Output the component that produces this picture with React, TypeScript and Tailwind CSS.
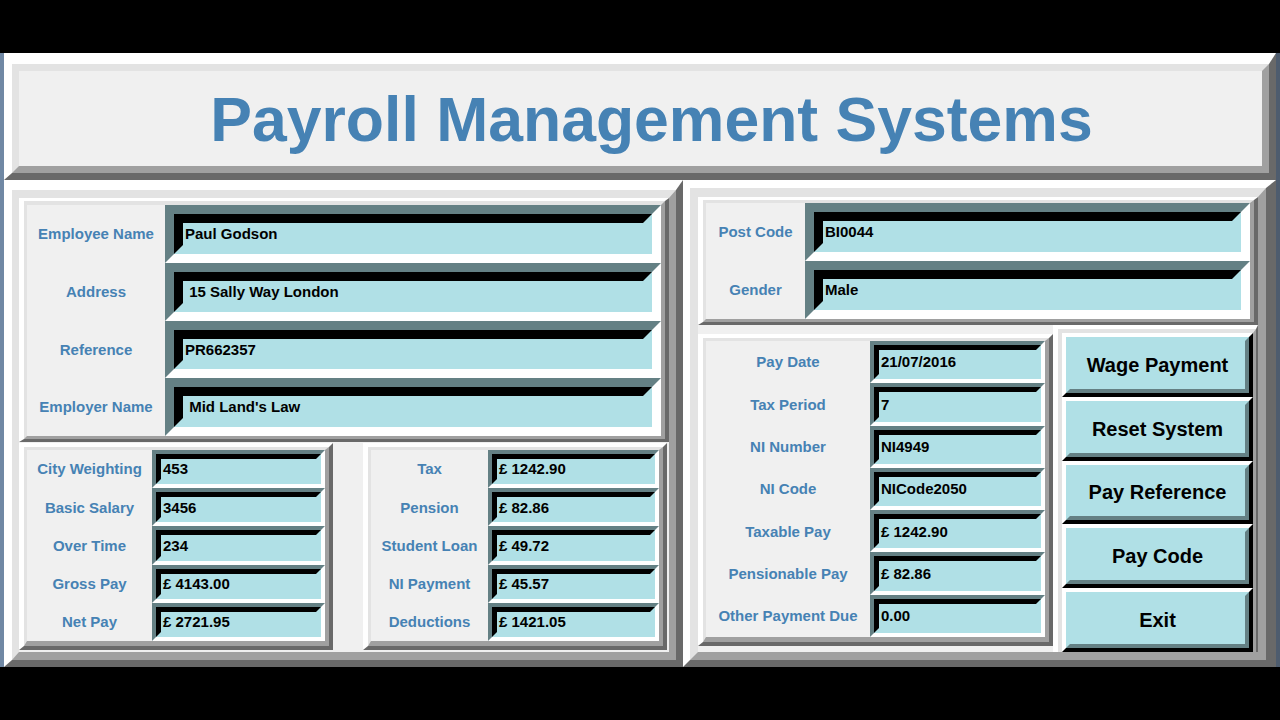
import type { ReactNode } from 'react';

type Field = { label: string; value: string };

const employee: Field[] = [
  { label: 'Employee Name', value: 'Paul Godson' },
  { label: 'Address', value: ' 15 Sally Way London' },
  { label: 'Reference', value: 'PR662357' },
  { label: 'Employer Name', value: " Mid Land's Law" },
];

const earnings: Field[] = [
  { label: 'City Weighting', value: '453' },
  { label: 'Basic Salary', value: '3456' },
  { label: 'Over Time', value: '234' },
  { label: 'Gross Pay', value: '£ 4143.00' },
  { label: 'Net Pay', value: '£ 2721.95' },
];

const deductions: Field[] = [
  { label: 'Tax', value: '£ 1242.90' },
  { label: 'Pension', value: '£ 82.86' },
  { label: 'Student Loan', value: '£ 49.72' },
  { label: 'NI Payment', value: '£ 45.57' },
  { label: 'Deductions', value: '£ 1421.05' },
];

const postal: Field[] = [
  { label: 'Post Code', value: 'BI0044' },
  { label: 'Gender', value: 'Male' },
];

const payInfo: Field[] = [
  { label: 'Pay Date', value: '21/07/2016' },
  { label: 'Tax Period', value: '7' },
  { label: 'NI Number', value: 'NI4949' },
  { label: 'NI Code', value: 'NICode2050' },
  { label: 'Taxable Pay', value: '£ 1242.90' },
  { label: 'Pensionable Pay', value: '£ 82.86' },
  { label: 'Other Payment Due', value: '0.00' },
];

const actions = ['Wage Payment', 'Reset System', 'Pay Reference', 'Pay Code', 'Exit'];

const OUTER_COLORS = 'border-t-white border-l-white border-r-[#696969] border-b-[#696969]';
const INNER_COLORS = 'border-t-[#e3e3e3] border-l-[#e3e3e3] border-r-[#a0a0a0] border-b-[#a0a0a0]';

// raised sub-panel (white/lightgray top-left, gray/dark bottom-right)
function SubPanel({
  className,
  outer = 'border-t-[4px] border-l-[5px] border-r-[4px] border-b-[4px]',
  inner = 'border-t-[3px] border-l-[3px] border-r-[4px] border-b-[5px]',
  children,
}: {
  className: string;
  outer?: string;
  inner?: string;
  children: ReactNode;
}) {
  return (
    <div className={`${className} ${outer} ${OUTER_COLORS}`}>
      <div className={`h-full flex flex-col bg-[#f0f0f0] ${inner} ${INNER_COLORS}`}>{children}</div>
    </div>
  );
}

function Label({ text, width }: { text: string; width: string }) {
  return (
    <div className={`${width} shrink-0 flex items-center justify-center pt-[1px] text-[15px] font-bold text-[#4682b4]`}>
      {text}
    </div>
  );
}

function BigBox({ value }: { value: string }) {
  return (
    <div className="flex-1 h-full border-[9px] border-t-[#648084] border-l-[#648084] border-r-white border-b-white">
      <div className="h-full flex items-center pl-[2px] pt-[1px] whitespace-pre text-[15px] font-bold text-black bg-[#b0e0e6] border-[9px] border-t-black border-l-black border-r-[#b0e0e6] border-b-[#b0e0e6]">
        {value}
      </div>
    </div>
  );
}

function SmallBox({ value }: { value: string }) {
  return (
    <div className="flex-1 h-full border-[4px] border-t-[#648084] border-l-[#648084] border-r-white border-b-white">
      <div className="h-full flex items-center pl-[2px] pt-[1px] whitespace-pre text-[15px] font-bold text-black bg-[#b0e0e6] border-[5px] border-t-black border-l-black border-r-[#b0e0e6] border-b-[#b0e0e6]">
        {value}
      </div>
    </div>
  );
}

function ActionButton({ text }: { text: string }) {
  return (
    <button
      type="button"
      className="flex-1 min-h-0 w-full border-[4px] border-t-white border-l-white border-r-black border-b-black"
    >
      <div className="h-full flex items-center justify-center text-[20px] font-bold text-black bg-[#b0e0e6] border-[4px] border-t-[#b0e0e6] border-l-[#b0e0e6] border-r-[#648084] border-b-[#648084]">
        {text}
      </div>
    </button>
  );
}

export default function App() {
  return (
    <div className="w-[1280px] h-[720px] bg-black flex flex-col overflow-hidden font-['Liberation_Sans',Arial,Helvetica,sans-serif]">
      <div className="h-[53px] shrink-0" />
      <div className="flex h-[614px] shrink-0">
        <div className="w-[4px] bg-[#7088a4]" />

        <div className="w-[1272px] flex flex-col bg-[#f0f0f0]">
          {/* title bar */}
          <div className="h-[127px] shrink-0 border-t-[11px] border-l-[8px] border-r-[7px] border-b-[7px] border-t-white border-l-white border-r-[#696969] border-b-[#696969]">
            <div className="h-full flex items-center justify-center pl-[22px] bg-[#f0f0f0] border-[7px] border-t-[#e3e3e3] border-l-[#e3e3e3] border-r-[#a0a0a0] border-b-[#a0a0a0]">
              <h1 className="text-[62.5px] leading-none font-bold text-[#4682b4] pt-[2px]">Payroll Management Systems</h1>
            </div>
          </div>

          <div className="flex flex-1 min-h-0">
            {/* left panel */}
            <div className="w-[679px] shrink-0 border-l-[8px] border-t-[10px] border-r-[7px] border-b-[7px] border-l-white border-t-white border-r-[#696969] border-b-[#696969]">
              <div className="h-full flex flex-col bg-[#f0f0f0] border-l-[7px] border-t-[8px] border-r-[7px] border-b-[8px] border-l-[#e3e3e3] border-t-[#e3e3e3] border-r-[#a0a0a0] border-b-[#a0a0a0]">
                <SubPanel
                  className="h-[244px] shrink-0"
                  outer="border-t-[3px] border-l-[5px] border-r-[4px] border-b-[3px]"
                  inner="border-t-[4px] border-l-[3px] border-r-[4px] border-b-[3px]"
                >
                  {employee.map(f => (
                    <div key={f.label} className="flex flex-1 min-h-0">
                      <Label text={f.label} width="w-[138px]" />
                      <BigBox value={f.value} />
                    </div>
                  ))}
                </SubPanel>

                <div className="flex flex-1 min-h-0 pt-[1px] pb-[2px]">
                  <SubPanel className="w-[314px] h-full">
                    {earnings.map(f => (
                      <div key={f.label} className="flex flex-1 min-h-0">
                        <Label text={f.label} width="w-[125px]" />
                        <SmallBox value={f.value} />
                      </div>
                    ))}
                  </SubPanel>
                  <SubPanel className="w-[304px] h-full ml-auto mr-[2px]">
                    {deductions.map(f => (
                      <div key={f.label} className="flex flex-1 min-h-0">
                        <Label text={f.label} width="w-[117px]" />
                        <SmallBox value={f.value} />
                      </div>
                    ))}
                  </SubPanel>
                </div>
              </div>
            </div>

            {/* right panel */}
            <div className="flex-1 border-l-[7px] border-t-[8px] border-r-[10px] border-b-[7px] border-l-white border-t-white border-r-[#696969] border-b-[#696969]">
              <div className="h-full flex flex-col bg-[#f0f0f0] border-l-[8px] border-t-[9px] border-r-[8px] border-b-[8px] border-l-[#e3e3e3] border-t-[#e3e3e3] border-r-[#a0a0a0] border-b-[#a0a0a0]">
                <SubPanel
                  className="h-[128px] shrink-0"
                  outer="border-t-[3px] border-l-[5px] border-r-[4px] border-b-[3px]"
                  inner="border-t-[3px] border-l-[3px] border-r-[4px] border-b-[3px]"
                >
                  {postal.map(f => (
                    <div key={f.label} className="flex flex-1 min-h-0">
                      <Label text={f.label} width="w-[99px]" />
                      <BigBox value={f.value} />
                    </div>
                  ))}
                </SubPanel>

                <div className="flex flex-1 min-h-0">
                  <SubPanel className="w-[355px] shrink-0 mt-[9px] mb-[6px]">
                    {payInfo.map(f => (
                      <div key={f.label} className="flex flex-1 min-h-0">
                        <Label text={f.label} width="w-[164px]" />
                        <SmallBox value={f.value} />
                      </div>
                    ))}
                  </SubPanel>

                  <div className="flex-1 border-t-[4px] border-l-[5px] border-r-[2px] border-t-white border-l-white border-r-[#696969]">
                    <div className="h-full flex flex-col bg-[#f0f0f0] border-t-[4px] border-l-[4px] border-r-[3px] border-t-[#e3e3e3] border-l-[#e3e3e3] border-r-[#a0a0a0]">
                      {actions.map(a => (
                        <ActionButton key={a} text={a} />
                      ))}
                    </div>
                  </div>
                </div>
              </div>
            </div>
          </div>
        </div>

        <div className="w-[4px] bg-[#4e5c6e]" />
      </div>
    </div>
  );
}
